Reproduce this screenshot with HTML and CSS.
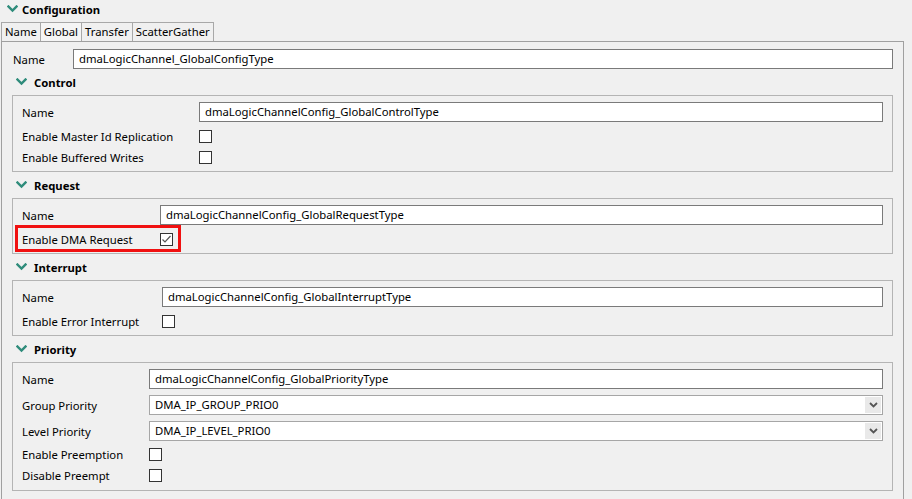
FILE: index.html
```html
<!DOCTYPE html>
<html lang="en">
  <head>
    <meta charset="UTF-8" />
    <title>Configuration</title>
    <link rel="stylesheet" href="styles.css">
  </head>
  <body>
    <div class="top-header">
      <svg class="chev" width="11" height="8" viewBox="0 0 11 8"><polyline points="1.5,1.5 5.5,5.5 9.5,1.5" /></svg>
      <span>Configuration</span>
    </div>

    <div class="tabs">
      <div class="tab">Name</div>
      <div class="tab active">Global</div>
      <div class="tab">Transfer</div>
      <div class="tab">ScatterGather</div>
    </div>

    <div class="panel">
      <div class="row top-row">
        <label>Name</label>
        <div class="input">dmaLogicChannel_GlobalConfigType</div>
      </div>

      <!-- Control -->
      <div class="section-title">
        <svg class="chev" width="11" height="8" viewBox="0 0 11 8"><polyline points="1.5,1.5 5.5,5.5 9.5,1.5" /></svg>
        <span>Control</span>
      </div>
      <div class="group control">
        <div class="row">
          <label>Name</label>
          <div class="input">dmaLogicChannelConfig_GlobalControlType</div>
        </div>
        <div class="row check-row">
          <label>Enable Master Id Replication</label>
          <span class="checkbox"></span>
        </div>
        <div class="row check-row">
          <label>Enable Buffered Writes</label>
          <span class="checkbox"></span>
        </div>
      </div>

      <!-- Request -->
      <div class="section-title">
        <svg class="chev" width="11" height="8" viewBox="0 0 11 8"><polyline points="1.5,1.5 5.5,5.5 9.5,1.5" /></svg>
        <span>Request</span>
      </div>
      <div class="group request">
        <div class="row">
          <label>Name</label>
          <div class="input">dmaLogicChannelConfig_GlobalRequestType</div>
        </div>
        <div class="row check-row marked">
          <label>Enable DMA Request</label>
          <span class="checkbox">
            <svg width="11" height="11" viewBox="0 0 11 11"><polyline points="1.5,5.5 4,8 9.5,2" /></svg>
          </span>
        </div>
      </div>

      <!-- Interrupt -->
      <div class="section-title">
        <svg class="chev" width="11" height="8" viewBox="0 0 11 8"><polyline points="1.5,1.5 5.5,5.5 9.5,1.5" /></svg>
        <span>Interrupt</span>
      </div>
      <div class="group interrupt">
        <div class="row">
          <label>Name</label>
          <div class="input">dmaLogicChannelConfig_GlobalInterruptType</div>
        </div>
        <div class="row check-row">
          <label>Enable Error Interrupt</label>
          <span class="checkbox"></span>
        </div>
      </div>

      <!-- Priority -->
      <div class="section-title">
        <svg class="chev" width="11" height="8" viewBox="0 0 11 8"><polyline points="1.5,1.5 5.5,5.5 9.5,1.5" /></svg>
        <span>Priority</span>
      </div>
      <div class="group priority">
        <div class="row">
          <label>Name</label>
          <div class="input">dmaLogicChannelConfig_GlobalPriorityType</div>
        </div>
        <div class="row sel-row">
          <label>Group Priority</label>
          <div class="input select">
            <span>DMA_IP_GROUP_PRIO0</span>
            <span class="drop"><svg width="9" height="6" viewBox="0 0 9 6"><polyline points="1,1 4.5,4.5 8,1" /></svg></span>
          </div>
        </div>
        <div class="row sel-row">
          <label>Level Priority</label>
          <div class="input select">
            <span>DMA_IP_LEVEL_PRIO0</span>
            <span class="drop"><svg width="9" height="6" viewBox="0 0 9 6"><polyline points="1,1 4.5,4.5 8,1" /></svg></span>
          </div>
        </div>
        <div class="row check-row first-check">
          <label>Enable Preemption</label>
          <span class="checkbox"></span>
        </div>
        <div class="row check-row">
          <label>Disable Preempt</label>
          <span class="checkbox"></span>
        </div>
      </div>
    </div>
  </body>
</html>
```

FILE: styles.css
```css
* {
  margin: 0;
  padding: 0;
  box-sizing: border-box;
}

body {
  background-color: #f0f0f0;
  font-family: "Noto Sans", "Open Sans", sans-serif;
  font-size: 11.3px;
  color: #000;
  width: 912px;
  height: 499px;
  overflow: hidden;
}

.chev {
  fill: none;
  stroke: #2f8c7b;
  stroke-width: 2.4;
  stroke-linecap: square;
}

.top-header {
  height: 22px;
  display: flex;
  align-items: center;
  padding-left: 7px;
  padding-bottom: 4px;
  font-weight: bold;
}

.top-header span {
  margin-left: 4px;
}

.tabs {
  display: flex;
  height: 19px;
  padding-left: 1px;
}

.tab {
  border: 1px solid #a8a8a8;
  border-bottom: none;
  margin-right: -1px;
  padding: 0 3px;
  line-height: 18px;
  height: 19px;
  background-color: #f0f0f0;
}

.tab.active {
  background-color: #f5f5f5;
}

.panel {
  margin-left: 1px;
  width: 903px;
  border: 1px solid #a0a0a0;
  border-bottom: none;
  padding: 7px 10px 0 10px;
  height: 460px;
}

.row {
  display: grid;
  align-items: center;
}

.top-row {
  grid-template-columns: 61px 1fr;
}

.top-row label {
  padding-left: 1px;
}

.input {
  height: 20px;
  border: 1px solid #7a7a7a;
  background-color: #fff;
  padding: 0 5px;
  line-height: 18px;
  white-space: nowrap;
}

.section-title {
  height: 26px;
  display: flex;
  align-items: center;
  padding-left: 4px;
  font-weight: bold;
}

.section-title span {
  margin-left: 7px;
}

.group {
  border: 1px solid #b4b4b4;
  padding: 6px 9px 4px 9px;
}

.check-row {
  height: 21px;
}

.row + .check-row {
  margin-top: 4px;
}

.check-row + .check-row {
  margin-top: 0;
}

.checkbox {
  width: 13px;
  height: 13px;
  border: 1px solid #333;
  background-color: #fff;
  display: flex;
  align-items: center;
  justify-content: center;
}

.checkbox svg {
  fill: none;
  stroke: #555;
  stroke-width: 1.2;
}

.control {
  padding-bottom: 3px;
}

.control .row {
  grid-template-columns: 177px 1fr;
}

.request .row {
  grid-template-columns: 138px 1fr;
}

.request {
  padding-bottom: 3px;
}

.interrupt .row {
  grid-template-columns: 140px 1fr;
}

.interrupt {
  padding-bottom: 3px;
}

.priority .row {
  grid-template-columns: 127px 1fr;
}

.sel-row {
  margin-top: 6px;
}

.priority .first-check {
  margin-top: 3px;
}

.select {
  border-color: #a6a6a6;
  display: flex;
  align-items: center;
  justify-content: space-between;
  padding-right: 1px;
}

.drop {
  width: 16px;
  height: 16px;
  background-color: #e9e9e9;
  display: flex;
  align-items: center;
  justify-content: center;
}

.drop svg {
  fill: none;
  stroke: #555;
  stroke-width: 1.8;
}

.marked {
  position: relative;
}

.marked::after {
  content: "";
  box-sizing: border-box;
  position: absolute;
  left: -7px;
  top: -4px;
  width: 166px;
  height: 27px;
  border: 3px solid #f01010;
}
```
